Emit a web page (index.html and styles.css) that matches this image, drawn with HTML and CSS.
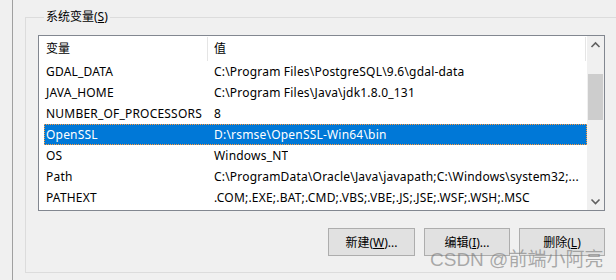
FILE: index.html
```html
<!DOCTYPE html>
<html lang="zh-CN">
<head>
    <meta charset="UTF-8">
    <title>系统变量</title>
    <link rel="stylesheet" href="styles.css">
</head>
<body>
    <div class="window">
        <div class="edge"></div>
        <div class="panel">
            <fieldset class="group">
                <legend>系统变量(<u>S</u>)</legend>
                <div class="listbox">
                    <div class="list-inner">
                        <div class="list-header">
                            <div class="hcell name">变量</div>
                            <div class="hcell value">值</div>
                        </div>
                        <div class="rows">
                            <div class="row"><div class="cell name">GDAL_DATA</div><div class="cell value">C:\Program Files\PostgreSQL\9.6\gdal-data</div></div>
                            <div class="row"><div class="cell name">JAVA_HOME</div><div class="cell value">C:\Program Files\Java\jdk1.8.0_131</div></div>
                            <div class="row"><div class="cell name">NUMBER_OF_PROCESSORS</div><div class="cell value">8</div></div>
                            <div class="row selected"><div class="cell name">OpenSSL</div><div class="cell value">D:\rsmse\OpenSSL-Win64\bin</div></div>
                            <div class="row"><div class="cell name">OS</div><div class="cell value">Windows_NT</div></div>
                            <div class="row"><div class="cell name">Path</div><div class="cell value">C:\ProgramData\Oracle\Java\javapath;C:\Windows\system32;...</div></div>
                            <div class="row"><div class="cell name">PATHEXT</div><div class="cell value">.COM;.EXE;.BAT;.CMD;.VBS;.VBE;.JS;.JSE;.WSF;.WSH;.MSC</div></div>
                        </div>
                    </div>
                    <div class="scrollbar">
                        <div class="arrow">
                            <svg width="17" height="17" viewBox="0 0 17 17"><polyline points="4.5,11 8.5,7 12.5,11" fill="none" stroke="#606060" stroke-width="1.6"/></svg>
                        </div>
                        <div class="track"><div class="thumb"></div></div>
                        <div class="arrow">
                            <svg width="17" height="17" viewBox="0 0 17 17"><polyline points="4.5,6.5 8.5,10.5 12.5,6.5" fill="none" stroke="#606060" stroke-width="1.6"/></svg>
                        </div>
                    </div>
                </div>
                <div class="buttons">
                    <button class="btn">新建(<u>W</u>)...</button>
                    <button class="btn">编辑(<u>I</u>)...</button>
                    <button class="btn">删除(<u>L</u>)</button>
                </div>
            </fieldset>
        </div>
        <div class="watermark">CSDN @前端小阿亮</div>
    </div>
</body>
</html>
```

FILE: styles.css
```css
body {
    margin: 0;
    background: #f0f0f0;
    font-family: "Noto Sans", "Noto Sans CJK SC", sans-serif;
    font-size: 12px;
    color: #000;
    overflow: hidden;
}
.window {
    position: relative;
    display: flex;
    width: 616px;
    height: 280px;
    overflow: hidden;
}
.edge {
    width: 12px;
    flex: none;
    border-right: 1px solid #a0a0a0;
}
.panel {
    flex: none;
    width: 620px;
}
.group {
    margin: 9px 0 0 12px;
    padding: 0 0 16px 12px;
    border: 1px solid #dcdcdc;
    width: 640px;
    box-sizing: border-box;
}
.group legend {
    margin-left: 6px;
    padding: 0 2px;
    line-height: 16px;
    font-size: 12px;
}
.listbox {
    margin-top: 10px;
    width: 567px;
    height: 176px;
    box-sizing: border-box;
    border: 1px solid #828790;
    background: #fff;
    display: flex;
}
.list-inner {
    width: 548px;
    display: flex;
    flex-direction: column;
}
.list-header {
    display: flex;
    height: 25px;
    padding-top: 1px;
    box-sizing: border-box;
}
.hcell {
    height: 24px;
    line-height: 24px;
    border-right: 1px solid #e5e5e5;
    box-sizing: border-box;
}
.hcell.name {
    width: 169px;
    padding-left: 7px;
}
.hcell.value {
    width: 378px;
    padding-left: 6px;
}
.rows {
    margin-left: 5px;
    width: 543px;
    letter-spacing: 0.2px;
}
.row {
    display: flex;
    height: 21px;
    line-height: 21px;
    white-space: nowrap;
}
.cell.name {
    width: 164px;
    padding-left: 2px;
    box-sizing: border-box;
    flex: none;
}
.cell.value {
    padding-left: 6px;
    overflow: hidden;
}
.row.selected {
    background: #0078d7;
    color: #fff;
    outline: 1px dotted #ff9a3c;
    outline-offset: -1px;
}
.scrollbar {
    width: 17px;
    background: #f0f0f0;
    display: flex;
    flex-direction: column;
}
.arrow {
    height: 17px;
}
.arrow svg {
    display: block;
}
.track {
    flex: 1;
    padding: 21px 1px 0 1px;
}
.thumb {
    height: 46px;
    background: #cdcdcd;
}
.buttons {
    display: flex;
    justify-content: flex-end;
    gap: 9px;
    width: 567px;
    margin-top: 17px;
}
.btn {
    width: 86px;
    height: 28px;
    background: #e1e1e1;
    border: 1px solid #adadad;
    font-family: inherit;
    font-size: 12px;
    padding: 0;
    color: #000;
}
.btn:first-child {
    width: 87px;
}
.watermark {
    position: absolute;
    left: 430px;
    top: 246px;
    font-family: "Liberation Sans", "Noto Sans CJK SC", sans-serif;
    font-size: 19px;
    line-height: 28px;
    color: rgba(120, 120, 120, 0.6);
    white-space: nowrap;
}
```
